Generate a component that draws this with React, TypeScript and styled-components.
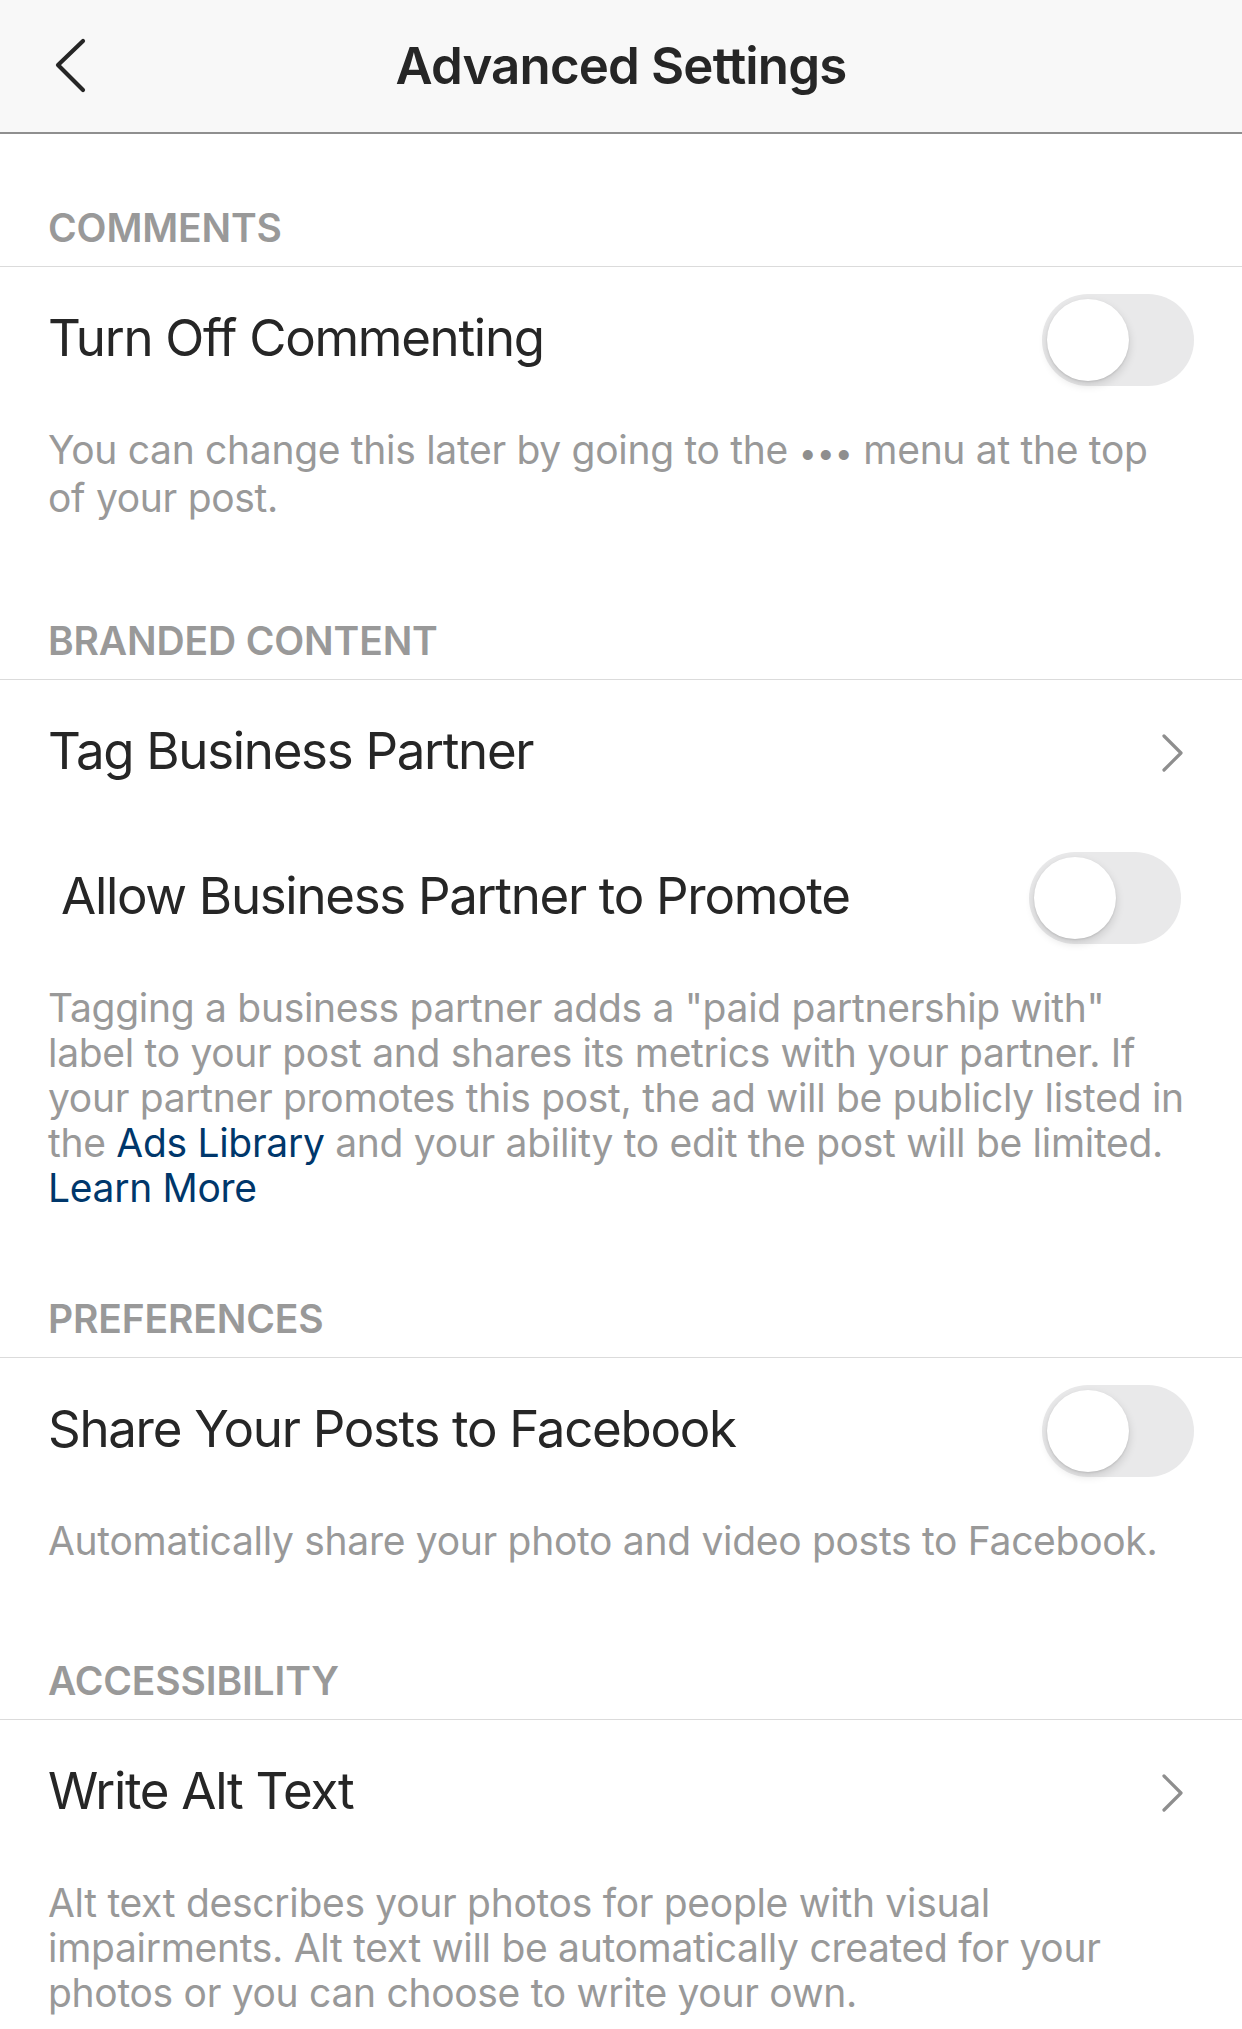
import React from "react";
import styled, { createGlobalStyle } from "styled-components";

const GlobalStyle = createGlobalStyle`
  html, body { margin: 0; padding: 0; background: #ffffff; }
  body {
    font-family: Inter, "Noto Sans", "Liberation Sans", sans-serif;
    -webkit-font-smoothing: antialiased;
  }
  * { box-sizing: border-box; }
`;

const Page = styled.div`
  width: 1242px;
  min-height: 2029px;
  background: #ffffff;
  overflow: hidden;
`;

const Header = styled.header`
  height: 134px;
  background: #f8f8f8;
  border-bottom: 2px solid #8f8f8f;
  display: grid;
  grid-template-columns: 1fr auto 1fr;
  align-items: center;
`;

const BackButton = styled.button`
  justify-self: start;
  background: none;
  border: 0;
  padding: 0 0 0 52px;
  display: flex;
  align-items: center;
  cursor: pointer;
`;

const Title = styled.h1`
  margin: 0;
  font-size: 51px;
  line-height: 60px;
  font-weight: 600;
  color: #262626;
  letter-spacing: -0.85px;
`;

const SectionHeader = styled.div<{ $top: number }>`
  padding: ${(p) => p.$top}px 48px 14px;
  font-size: 39px;
  line-height: 48px;
  font-weight: 600;
  color: #999999;
  letter-spacing: -0.15px;
  border-bottom: 1px solid #dbdbdb;
`;

const Row = styled.div<{ $inset?: number }>`
  height: 145px;
  padding: 0 ${(p) => p.$inset ?? 48}px;
  display: flex;
  align-items: center;
  justify-content: space-between;
`;

const RowTitle = styled.span`
  font-size: 51px;
  line-height: 60px;
  font-weight: 400;
  color: #262626;
  letter-spacing: -1.3px;
  margin-bottom: 3px;
`;

const Description = styled.p`
  margin: 0;
  padding: 15px 40px 0 48px;
  font-size: 39px;
  line-height: 45px;
  color: #999999;
  letter-spacing: -0.3px;
`;

const Link = styled.a`
  color: #00376b;
  text-decoration: none;
`;

const Dots = styled.span`
  color: #8e8e8e;
  font-size: 32px;
  letter-spacing: 0px;
`;

const Track = styled.div`
  width: 152px;
  height: 92px;
  border-radius: 46px;
  background: #e9e9ea;
  padding: 5px;
  display: flex;
  align-items: center;
  flex-shrink: 0;
`;

const Knob = styled.div`
  width: 82px;
  height: 82px;
  border-radius: 50%;
  background: #ffffff;
  box-shadow: 0 4px 10px rgba(0, 0, 0, 0.14), 0 1px 2px rgba(0, 0, 0, 0.1);
`;

const Chevron = styled.svg`
  width: 34px;
  height: 40px;
  flex-shrink: 0;
`;

const Toggle = () => (
  <Track>
    <Knob />
  </Track>
);

const ChevronRight = () => (
  <Chevron viewBox="0 0 34 40">
    <path
      d="M4 3 L21 20 L4 37"
      fill="none"
      stroke="#8e8e8e"
      strokeWidth="3.2"
      strokeLinecap="round"
      strokeLinejoin="round"
    />
  </Chevron>
);

const BackIcon = () => (
  <svg width="36" height="58" viewBox="0 0 36 58">
    <path
      d="M31 4 L6 28 L31 53"
      fill="none"
      stroke="#262626"
      strokeWidth="4.2"
      strokeLinecap="round"
      strokeLinejoin="round"
    />
  </svg>
);

export default function App() {
  return (
    <Page>
      <GlobalStyle />
      <Header>
        <BackButton aria-label="Back">
          <BackIcon />
        </BackButton>
        <Title>Advanced Settings</Title>
        <span />
      </Header>

      <SectionHeader $top={70}>COMMENTS</SectionHeader>
      <Row>
        <RowTitle>Turn Off Commenting</RowTitle>
        <Toggle />
      </Row>
      <Description>
        You can change this later by going to the <Dots>•••</Dots> menu at the top
        <br />
        of your post.
      </Description>

      <SectionHeader $top={97}>BRANDED CONTENT</SectionHeader>
      <Row>
        <RowTitle>Tag Business Partner</RowTitle>
        <ChevronRight />
      </Row>
      <Row $inset={61}>
        <RowTitle>Allow Business Partner to Promote</RowTitle>
        <Toggle />
      </Row>
      <Description>
        Tagging a business partner adds a "paid partnership with"
        <br />
        label to your post and shares its metrics with your partner. If
        <br />
        your partner promotes this post, the ad will be publicly listed in
        <br />
        the <Link href="#">Ads Library</Link> and your ability to edit the post will be limited.
        <br />
        <Link href="#">Learn More</Link>
      </Description>

      <SectionHeader $top={85}>PREFERENCES</SectionHeader>
      <Row>
        <RowTitle>Share Your Posts to Facebook</RowTitle>
        <Toggle />
      </Row>
      <Description>Automatically share your photo and video posts to Facebook.</Description>

      <SectionHeader $top={94}>ACCESSIBILITY</SectionHeader>
      <Row>
        <RowTitle>Write Alt Text</RowTitle>
        <ChevronRight />
      </Row>
      <Description>
        Alt text describes your photos for people with visual
        <br />
        impairments. Alt text will be automatically created for your
        <br />
        photos or you can choose to write your own.
      </Description>
    </Page>
  );
}
